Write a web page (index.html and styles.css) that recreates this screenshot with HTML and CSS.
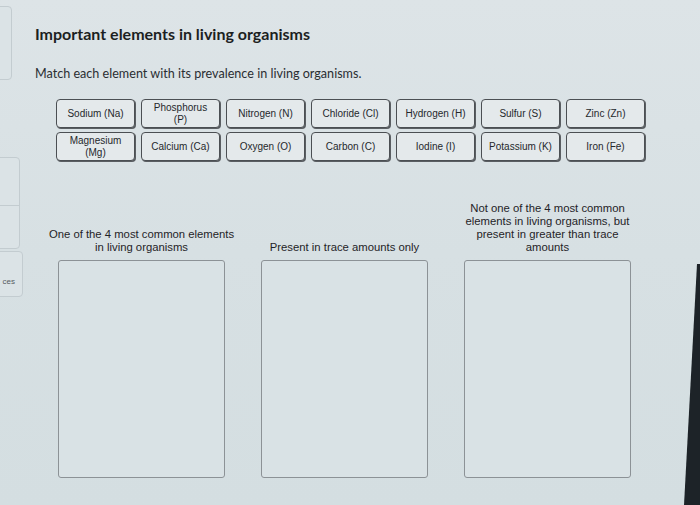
FILE: index.html
```html
<!DOCTYPE html>
<html lang="en">
<head>
<meta charset="utf-8">
<title>Important elements in living organisms</title>
<link rel="stylesheet" href="styles.css">
</head>
<body>
<div class="page">
  <aside class="sidebar">
    <div class="panel panel-a"></div>
    <div class="panel panel-b"><div class="panel-split"></div></div>
    <div class="panel panel-c"><span class="panel-text">ces</span></div>
  </aside>
  <main class="main">
    <h1 class="title">Important elements in living organisms</h1>
    <p class="subtitle">Match each element with its prevalence in living organisms.</p>
    <div class="chips">
      <div class="chip">Sodium (Na)</div>
      <div class="chip">Phosphorus<br>(P)</div>
      <div class="chip">Nitrogen (N)</div>
      <div class="chip">Chloride (Cl)</div>
      <div class="chip">Hydrogen (H)</div>
      <div class="chip">Sulfur (S)</div>
      <div class="chip">Zinc (Zn)</div>
      <div class="chip">Magnesium<br>(Mg)</div>
      <div class="chip">Calcium (Ca)</div>
      <div class="chip">Oxygen (O)</div>
      <div class="chip">Carbon (C)</div>
      <div class="chip">Iodine (I)</div>
      <div class="chip">Potassium (K)</div>
      <div class="chip">Iron (Fe)</div>
    </div>
    <div class="categories">
      <section class="category">
        <div class="cat-label">One of the 4 most common elements<br>in living organisms</div>
        <div class="drop"></div>
      </section>
      <section class="category">
        <div class="cat-label">Present in trace amounts only</div>
        <div class="drop"></div>
      </section>
      <section class="category">
        <div class="cat-label">Not one of the 4 most common<br>elements in living organisms, but<br>present in greater than trace<br>amounts</div>
        <div class="drop"></div>
      </section>
    </div>
  </main>
</div>
<svg class="bezel" width="700" height="505" viewBox="0 0 700 505" aria-hidden="true">
  <polygon points="697,264 700,264 700,505 684,505" fill="#1d2328"/>
</svg>
</body>
</html>
```

FILE: styles.css
```css
html, body {
  margin: 0;
  padding: 0;
}
body {
  width: 700px;
  height: 505px;
  overflow: hidden;
  background: linear-gradient(180deg, #dde4e7 0%, #d7e0e3 50%, #d4dee1 100%);
  color: #1d2125;
  position: relative;
}
.page {
  display: flex;
  height: 505px;
}
.sidebar {
  width: 22px;
  flex: none;
  display: flex;
  flex-direction: column;
}
.panel {
  border: 1px solid #c3ccd0;
  border-radius: 4px;
  box-sizing: border-box;
  background: #dbe3e6;
}
.panel-a {
  width: 30px;
  margin-left: -18px;
  height: 74px;
  margin-top: 6px;
}
.panel-b {
  width: 40px;
  margin-left: -20px;
  height: 92px;
  margin-top: 77px;
}
.panel-split {
  border-top: 1px solid #c3ccd0;
  margin-top: 47px;
}
.panel-c {
  width: 44px;
  margin-left: -21px;
  height: 46px;
  margin-top: 2px;
  display: flex;
  align-items: flex-end;
  justify-content: flex-end;
  padding: 0 7px 9px 0;
}
.panel-text {
  font-family: "Liberation Sans", Arial, sans-serif;
  font-size: 8px;
  line-height: 10px;
  color: #555b60;
}
.main {
  flex: 1;
  padding: 24px 0 0 13px;
}
.title {
  margin: 0;
  font-family: Lato, "Open Sans", sans-serif;
  font-weight: 700;
  font-size: 16px;
  line-height: 20px;
  color: #1c1f22;
}
.subtitle {
  margin: 22px 0 0;
  font-family: Lato, "Open Sans", sans-serif;
  font-size: 12.6px;
  line-height: 16px;
  color: #2a2e32;
}
.chips {
  margin: 17px 0 0 21px;
  display: grid;
  grid-template-columns: repeat(7, 79px);
  grid-auto-rows: 29px;
  column-gap: 6px;
  row-gap: 4px;
}
.chip {
  box-sizing: border-box;
  display: flex;
  align-items: center;
  justify-content: center;
  text-align: center;
  font-family: "Liberation Sans", Arial, sans-serif;
  font-size: 10px;
  line-height: 12px;
  color: #24282c;
  background: #e4e9eb;
  border: 1px solid #4b4f53;
  border-radius: 4px;
  box-shadow: 1px 1px 0 #5a5e62;
}
.categories {
  margin: 41px 0 0 23px;
  display: flex;
  align-items: flex-end;
  gap: 36px;
}
.category {
  width: 167px;
  display: flex;
  flex-direction: column;
  align-items: center;
}
.cat-label {
  font-family: "Liberation Sans", Arial, sans-serif;
  font-size: 11.3px;
  line-height: 13px;
  text-align: center;
  color: #1f2327;
  white-space: nowrap;
}
.drop {
  margin-top: 6px;
  width: 167px;
  height: 218px;
  box-sizing: border-box;
  border: 1px solid #8c9296;
  border-radius: 3px;
  background: #d9e2e5;
}
.bezel {
  position: absolute;
  left: 0;
  top: 0;
  pointer-events: none;
}
```
